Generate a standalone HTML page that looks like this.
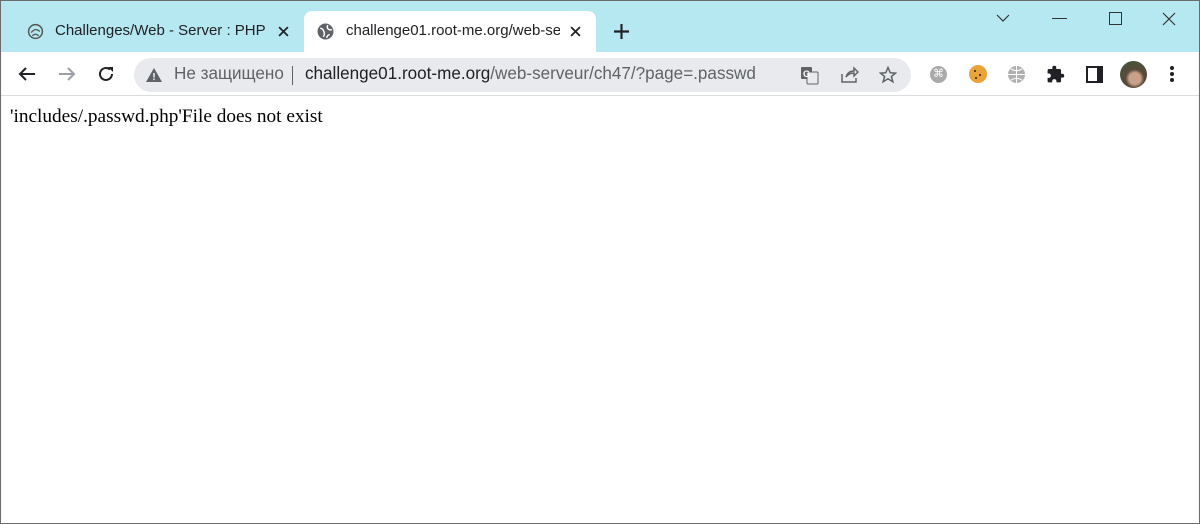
<!DOCTYPE html>
<html><head><meta charset="utf-8"><style>
*{margin:0;padding:0;box-sizing:border-box}
body{width:1200px;height:524px;overflow:hidden;background:#fff;font-family:"Liberation Sans",sans-serif;position:relative}
.win{position:absolute;inset:0;border:1px solid #6b6b6b}
.tabbar{position:absolute;left:0;top:0;width:1200px;height:52px;background:#b6e8f2}
.tab{position:absolute;top:11px;height:41px;font-size:15px;color:#202124;display:flex;align-items:center}
.tab.active{background:#fff;border-radius:8px 8px 0 0}
.toolbar{position:absolute;left:0;top:52px;width:1200px;height:44px;background:#fff;border-bottom:1px solid #dadce0}
.omni{position:absolute;left:134px;top:6px;width:777px;height:34px;background:#e8eaed;border-radius:17px;font-size:17.1px;display:flex;align-items:center}
.abs{position:absolute}
.content{position:absolute;left:10px;top:106px;font-family:"Liberation Serif",serif;font-size:19.3px;color:#000}
</style></head><body>
<div class="tabbar">
 <div class="tab" style="left:14px;width:290px">
  <svg class="abs" style="left:13px;top:12px" width="17" height="17" viewBox="0 0 16 16"><circle cx="8" cy="8" r="6.5" fill="none" stroke="#555" stroke-width="1.4"/><path d="M4 9q4-5 8-1M5 12q3-3 6 0" stroke="#555" fill="none" stroke-width="1.2"/></svg>
  <span class="abs" style="left:41px;top:11px;white-space:nowrap;width:212px;overflow:hidden">Challenges/Web - Server : PHP - Filters</span>
  <svg class="abs" style="left:264px;top:15px" width="11" height="11" viewBox="0 0 10 10"><path d="M1 1L9 9M9 1L1 9" stroke="#202124" stroke-width="1.6"/></svg>
 </div>
 <div class="tab active" style="left:304px;width:292px">
  <svg class="abs" style="left:13px;top:12px" width="17" height="17" viewBox="0 0 16 16"><circle cx="8" cy="8" r="7.5" fill="#5f6368"/><path d="M3 5q2 0 3 2t1 3-1 3M10 2q-1 3 1 4t3 0M9 14q1-3 3-3" stroke="#fff" fill="none" stroke-width="1.4"/></svg>
  <span class="abs" style="left:42px;top:11px;white-space:nowrap;width:214px;overflow:hidden">challenge01.root-me.org/web-serveur/ch47/</span>
  <svg class="abs" style="left:266px;top:15px" width="11" height="11" viewBox="0 0 10 10"><path d="M1 1L9 9M9 1L1 9" stroke="#202124" stroke-width="1.6"/></svg>
 </div>
 <svg class="abs" style="left:614px;top:24px" width="15" height="15" viewBox="0 0 14 14"><path d="M7 0V14M0 7H14" stroke="#202124" stroke-width="2"/></svg>
 <svg class="abs" style="left:996px;top:14px" width="14" height="8" viewBox="0 0 14 8"><path d="M1 1L7 7L13 1" stroke="#333" fill="none" stroke-width="1.2"/></svg>
 <div class="abs" style="left:1052px;top:18px;width:15px;height:1px;background:#333"></div>
 <div class="abs" style="left:1109px;top:12px;width:13px;height:13px;border:1.2px solid #333"></div>
 <svg class="abs" style="left:1162px;top:12px" width="14" height="14" viewBox="0 0 14 14"><path d="M1 1L13 13M13 1L1 13" stroke="#333" stroke-width="1.2"/></svg>
</div>
<div class="toolbar">
 <svg class="abs" style="left:18px;top:14px" width="18" height="16" viewBox="0 0 18 16"><path d="M17 8H2M8 2L2 8L8 14" stroke="#202124" fill="none" stroke-width="2"/></svg>
 <svg class="abs" style="left:58px;top:14px" width="18" height="16" viewBox="0 0 18 16"><path d="M1 8H16M10 2L16 8L10 14" stroke="#9aa0a6" fill="none" stroke-width="2"/></svg>
 <svg class="abs" style="left:97px;top:13px" width="18" height="18" viewBox="0 0 18 18"><path d="M15 9A6 6 0 1 1 13 4.5" stroke="#202124" fill="none" stroke-width="2"/><path d="M11 2H16V7Z" fill="#202124"/></svg>
 <div class="omni">
  <svg class="abs" style="left:12px;top:10px" width="16" height="14" viewBox="0 0 16 14"><path d="M8 0L16 14H0Z" fill="#5f6368"/><rect x="7.2" y="5" width="1.6" height="4.5" fill="#e8eaed"/><rect x="7.2" y="10.5" width="1.6" height="1.6" fill="#e8eaed"/></svg>
  <span class="abs" style="left:40px;top:6px;color:#5f6368">Не защищено</span>
  <div class="abs" style="left:158px;top:8px;width:1px;height:19px;background:#5f6368"></div>
  <span class="abs" style="left:171px;top:6px;color:#202124;white-space:nowrap">challenge01.root-me.org<span style="color:#5f6368">/web-serveur/ch47/?page=.passwd</span></span>
  <svg class="abs" style="left:666px;top:8px" width="19" height="19" viewBox="0 0 19 19"><rect x="1" y="1" width="11" height="12" rx="1" fill="#5f6368"/><rect x="7" y="6" width="11" height="12" rx="1" fill="#e8eaed" stroke="#5f6368"/><text x="3" y="11" font-size="9" fill="#fff" font-family="Liberation Sans" font-weight="bold">G</text></svg>
  <svg class="abs" style="left:706px;top:8px" width="19" height="18" viewBox="0 0 19 18"><path d="M2 8V16H16V12M6 11Q8 5 14 5V2L18 6L14 10V7Q9 7 6 11Z" stroke="#5f6368" fill="none" stroke-width="1.5"/></svg>
  <svg class="abs" style="left:745px;top:8px" width="18" height="18" viewBox="0 0 24 24"><path d="M12 2L15 9L22 9.5L16.5 14L18.5 21L12 17L5.5 21L7.5 14L2 9.5L9 9Z" stroke="#5f6368" fill="none" stroke-width="2"/></svg>
 </div>
 <div class="abs" style="left:930px;top:14px;width:17px;height:17px;border-radius:50%;background:#aaa;color:#fff;font-size:11px;text-align:center;line-height:17px">⌘</div>
 <div class="abs" style="left:969px;top:13px;width:18px;height:18px;border-radius:50%;background:#e8a43a"><div class="abs" style="left:5px;top:5px;width:2px;height:2px;background:#6b3a10"></div><div class="abs" style="left:10px;top:9px;width:2px;height:2px;background:#6b3a10"></div><div class="abs" style="left:6px;top:12px;width:2px;height:2px;background:#6b3a10"></div></div>
 <svg class="abs" style="left:1007px;top:13px" width="19" height="19" viewBox="0 0 20 20"><circle cx="10" cy="10" r="9" fill="#b0b0b0"/><path d="M1 10H19M10 1V19M4 4Q10 8 16 4M4 16Q10 12 16 16" stroke="#fff" fill="none"/></svg>
 <svg class="abs" style="left:1046px;top:13px" width="19" height="19" viewBox="0 0 24 24"><path d="M20.5 11H19V7a2 2 0 0 0-2-2h-4V3.5a2.5 2.5 0 0 0-5 0V5H4a2 2 0 0 0-2 2v3.8h1.5a2.7 2.7 0 0 1 0 5.4H2V20a2 2 0 0 0 2 2h3.8v-1.5a2.7 2.7 0 0 1 5.4 0V22H17a2 2 0 0 0 2-2v-4h1.5a2.5 2.5 0 0 0 0-5z" fill="#202124"/></svg>
 <div class="abs" style="left:1086px;top:14px;width:17px;height:17px;border:2px solid #202124;border-right:6px solid #202124"></div>
 <div class="abs" style="left:1120px;top:9px;width:27px;height:27px;border-radius:50%;background:radial-gradient(circle at 55% 65%,#c9a08a 0 25%,#5a4a3a 40%,#3a5a3a 100%)"></div>
 <div class="abs" style="left:1170px;top:14px;width:4px;height:4px;border-radius:50%;background:#202124;box-shadow:0 6px 0 #202124,0 12px 0 #202124"></div>
</div>
<div class="content">'includes/.passwd.php'File does not exist</div>
<div class="win"></div>
</body></html>
